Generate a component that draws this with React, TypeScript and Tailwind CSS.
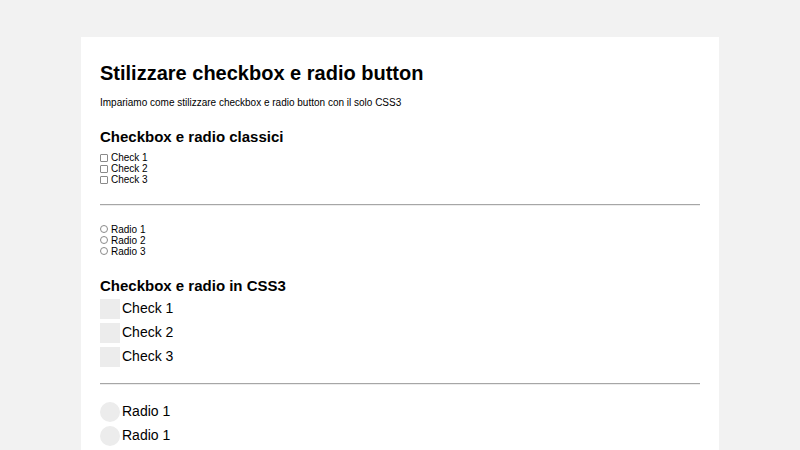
import React from "react";

function ClassicBox({ round }: { round?: boolean }) {
  return (
    <span
      className={`inline-block w-[8px] h-[8px] border border-[#8a8a8a] bg-white mr-[3px] ${round ? "rounded-full" : "rounded-[1px]"}`}
    />
  );
}

export default function App() {
  const checks = ["Check 1", "Check 2", "Check 3"];
  const radios = ["Radio 1", "Radio 2", "Radio 3"];
  return (
    <div className="min-h-[450px] bg-[#f2f2f2] pt-[37px] text-black" style={{ fontFamily: '"Liberation Sans", Arial, sans-serif' }}>
      <div className="ml-[81px] w-[638px] bg-white px-[19px] pt-[24px] pb-[40px]">
        <h1 className="text-[20px] leading-[24px] font-bold">Stilizzare checkbox e radio button</h1>
        <p className="mt-[11px] text-[10px] leading-[14px]">Impariamo come stilizzare checkbox e radio button con il solo CSS3</p>
        <h2 className="mt-[17px] text-[15px] leading-[20px] font-bold">Checkbox e radio classici</h2>
        <div className="mt-[5px] text-[10px] leading-[11px]">
          {checks.map((c) => (
            <div key={c} className="flex items-center">
              <ClassicBox />
              <span>{c}</span>
            </div>
          ))}
        </div>
        <div className="mt-[18.5px] h-[2px] border-t border-[#a6a6a6] border-b border-b-[#ededed]" />
        <div className="mt-[18px] text-[10px] leading-[11px]">
          {radios.map((c) => (
            <div key={c} className="flex items-center">
              <ClassicBox round />
              <span>{c}</span>
            </div>
          ))}
        </div>
        <h2 className="mt-[19.5px] text-[15px] leading-[20px] font-bold">Checkbox e radio in CSS3</h2>
        <div className="mt-[3px] flex flex-col gap-[4px] text-[14px]">
          {checks.map((c) => (
            <div key={c} className="flex items-center h-[20px]">
              <span className="w-[20px] h-[20px] bg-[#ececec] mr-[2px]" />
              <span className="leading-[16px] -mt-[3px]">{c}</span>
            </div>
          ))}
        </div>
        <div className="mt-[16px] h-[2px] border-t border-[#a6a6a6] border-b border-b-[#ededed]" />
        <div className="mt-[17px] flex flex-col gap-[4px] text-[14px]">
          {["Radio 1", "Radio 1"].map((c, i) => (
            <div key={i} className="flex items-center h-[20px]">
              <span className="w-[20px] h-[20px] rounded-full bg-[#ececec] mr-[2px]" />
              <span className="leading-[16px] -mt-[3px]">{c}</span>
            </div>
          ))}
        </div>
      </div>
    </div>
  );
}
